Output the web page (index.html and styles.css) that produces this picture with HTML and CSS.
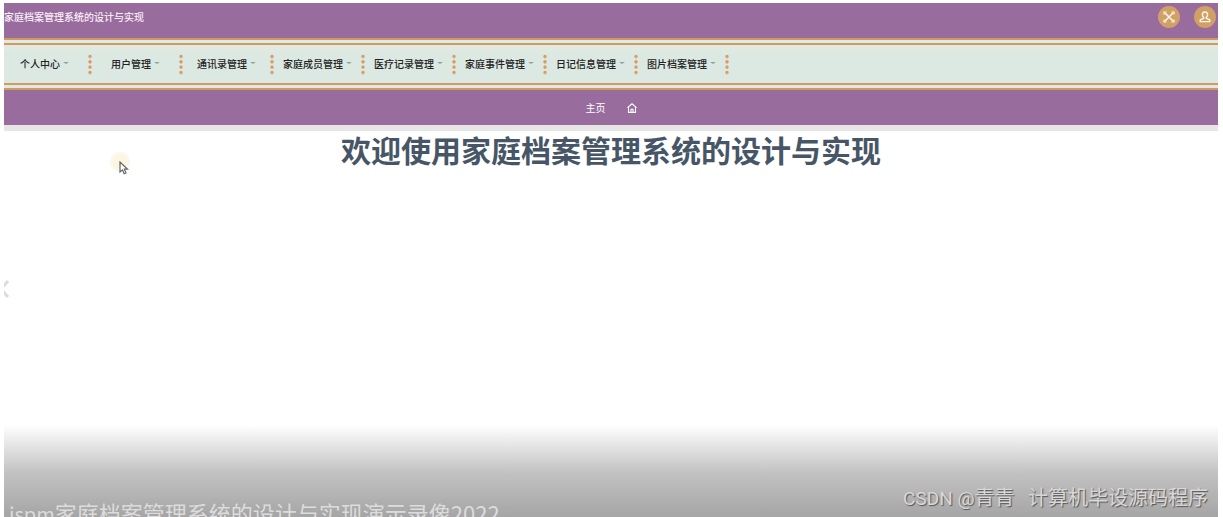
FILE: index.html
```
<!DOCTYPE html>
<html lang="zh-CN">
<head>
  <meta charset="UTF-8" />
  <title>家庭档案管理系统的设计与实现</title>
  <link rel="stylesheet" href="styles.css">
</head>
<body>
  <div class="screen">
    <header class="topbar">
      <span class="brand">家庭档案管理系统的设计与实现</span>
      <div class="tools">
        <button class="tool" type="button" aria-label="全屏">
          <svg width="12" height="12" viewBox="0 0 12 12" fill="none" stroke="#fff6e6" stroke-width="1.6">
            <path d="M2 2l8 8M10 2l-8 8"/>
            <path d="M1 3.500V1h2.500M8.500 1H11v2.500M11 8.500V11H8.500M3.500 11H1V8.500" stroke-width="1.2"/>
          </svg>
        </button>
        <button class="tool" type="button" aria-label="用户">
          <svg width="12" height="12" viewBox="0 0 12 12" fill="none" stroke="#fff6e6" stroke-width="1.4">
            <path d="M6 1C4.300 1 3.400 2.200 3.400 3.700C3.400 5 4 5.800 4.700 6.400V7.300L1.300 8.800V10.600H10.700V8.800L7.300 7.300V6.400C8 5.800 8.600 5 8.600 3.700C8.600 2.200 7.700 1 6 1Z"/>
          </svg>
        </button>
      </div>
    </header>

    <nav class="menu">
      <div class="item"><button type="button">个人中心<i class="caret"></i></button></div>
      <div class="item"><button type="button">用户管理<i class="caret"></i></button></div>
      <div class="item"><button type="button">通讯录管理<i class="caret"></i></button></div>
      <div class="item"><button type="button">家庭成员管理<i class="caret"></i></button></div>
      <div class="item"><button type="button">医疗记录管理<i class="caret"></i></button></div>
      <div class="item"><button type="button">家庭事件管理<i class="caret"></i></button></div>
      <div class="item"><button type="button">日记信息管理<i class="caret"></i></button></div>
      <div class="item"><button type="button">图片档案管理<i class="caret"></i></button></div>
    </nav>

    <div class="crumbs">
      <a href="#">主页</a>
      <a href="#" aria-label="首页">
        <svg width="10" height="10" viewBox="0 0 10 10" fill="none" stroke="#fff" stroke-width="1.1">
          <path d="M0.500 4.700L5 0.800L9.500 4.700M1.500 4V9.400H8.500V4M4 9.400V6.300H6V9.400"/>
        </svg>
      </a>
    </div>

    <main class="content">
      <h1>欢迎使用家庭档案管理系统的设计与实现</h1>
    </main>

    <svg class="prev" width="6" height="20" viewBox="0 0 6 20" fill="none" stroke="#dcdcdc" stroke-width="3">
      <path d="M4 2L-3 10L4 18"/>
    </svg>
    <div class="pointer">
      <svg width="10" height="14" viewBox="0 0 10 14" fill="#fff" stroke="#666" stroke-width="1.200">
        <path d="M1 1V11L3.500 8.900L5.200 12.700L7 11.900L5.400 8.200H8.600Z"/>
      </svg>
    </div>

    <div class="shade">
      <p class="caption"><span>jspm</span>家庭档案管理系统的设计与实现演示录像2022</p>
      <p class="watermark"><span>CSDN @</span>青青&nbsp;&nbsp; 计算机毕设源码程序</p>
    </div>
  </div>
</body>
</html>
```

FILE: styles.css
```
* {
  box-sizing: border-box;
}
body {
  margin: 0;
  padding: 3px 5px 0 4px;
  background: #fff;
  font-family: "Noto Sans CJK SC", sans-serif;
  font-size: 10px;
}
button {
  border: 0;
  padding: 0;
  background: none;
  font: inherit;
  color: inherit;
  cursor: pointer;
}
.screen {
  position: relative;
  height: calc(100vh - 3px);
  overflow: hidden;
}
.topbar {
  display: flex;
  justify-content: space-between;
  padding: 3px 2px 10px 0;
  background: #986c9c;
}
.brand {
  font-weight: 500;
  line-height: 22px;
  color: #f8ecf8;
}
.tools {
  display: flex;
  gap: 14px;
}
.tool {
  display: flex;
  align-items: center;
  justify-content: center;
  width: 22px;
  height: 22px;
  border-radius: 50%;
  background: #d1a066;
}
.menu {
  display: flex;
  border-top: 7px double #d09a62;
  border-bottom: 7px double #d09a62;
  background: linear-gradient(#e4eadf, #dce9e3 9px) padding-box, #e0eae4;
}
.item {
  display: flex;
  align-items: center;
  width: 91px;
  height: 38px;
  color: #222;
}
.item button {
  display: flex;
  flex: 1;
  align-items: center;
  justify-content: center;
  gap: 3px;
  padding-bottom: 2px;
  font-weight: 500;
  white-space: nowrap;
}
/* four dots between the entries */
.item::after {
  content: "";
  width: 4px;
  height: 21px;
  margin: 0 3px;
  background: radial-gradient(circle, #d99c60 1px, #d99c60 40%, transparent 65%) 0 0 / 4px 5px space;
}
.caret {
  border: 3px solid transparent;
  border-top: 2px solid #96a09c;
  border-bottom: 0;
}
.crumbs {
  display: flex;
  align-items: center;
  justify-content: center;
  gap: 21px;
  height: 35px;
  background: #986c9c;
}
.crumbs a {
  display: flex;
  color: #fff;
  text-decoration: none;
}
.content {
  border-top: 6px solid #e6e6e6;
}
h1 {
  margin: 0;
  font-size: 30px;
  line-height: 36px;
  text-align: center;
  color: #475666;
}
.prev {
  position: absolute;
  left: 0;
  top: 276px;
}
.pointer {
  position: absolute;
  left: 106px;
  top: 149px;
  width: 20px;
  height: 20px;
  border-radius: 50%;
  background: radial-gradient(#fcf5e2 40%, #fffbf3);
}
.pointer svg {
  position: absolute;
  left: 9px;
  top: 9px;
}
.shade {
  position: absolute;
  left: 0;
  right: 0;
  bottom: 0;
  height: 92px;
  background: linear-gradient(#fff, #c2c2c2 52%, #a5a5a5);
}
.caption {
  position: absolute;
  left: 5px;
  bottom: -12px;
  margin: 0;
  font-size: 22px;
  line-height: 30px;
  white-space: nowrap;
  color: #dcdcdc;
}
.caption span {
  font-size: 20px;
}
.watermark {
  position: absolute;
  right: 10px;
  bottom: 3px;
  margin: 0;
  font-size: 20px;
  line-height: 30px;
  white-space: nowrap;
  color: #d8d8d8;
  text-shadow: 1px 1px 1px #555;
}
.watermark span {
  font-family: Roboto, sans-serif;
  font-size: 19px;
}
```
